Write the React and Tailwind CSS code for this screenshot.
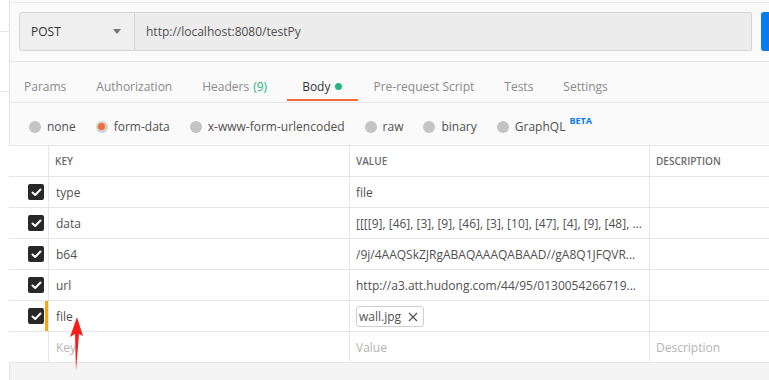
import React from 'react';

const tabs = [
  { label: 'Params' },
  { label: 'Authorization' },
  { label: 'Headers', count: '(9)' },
  { label: 'Body', active: true },
  { label: 'Pre-request Script' },
  { label: 'Tests' },
  { label: 'Settings' },
];

const bodyTypes = [
  { label: 'none' },
  { label: 'form-data', selected: true },
  { label: 'x-www-form-urlencoded' },
  { label: 'raw' },
  { label: 'binary' },
  { label: 'GraphQL', beta: true },
];

const rows = [
  { key: 'type', value: 'file' },
  { key: 'data', value: '[[[[9], [46], [3], [9], [46], [3], [10], [47], [4], [9], [48], ...' },
  { key: 'b64', value: '/9j/4AAQSkZJRgABAQAAAQABAAD//gA8Q1JFQVR...' },
  { key: 'url', value: 'http://a3.att.hudong.com/44/95/0130054266719...' },
  { key: 'file', file: 'wall.jpg', editing: true },
];

function Check() {
  return (
    <div className="w-[16px] h-[16px] rounded-[2px] bg-[#282828] flex items-center justify-center">
      <svg width="11" height="9" viewBox="0 0 11 9" fill="none">
        <path d="M1.5 4.5 L4.2 7 L9.5 1.5" stroke="white" strokeWidth="2" strokeLinecap="round" strokeLinejoin="round" />
      </svg>
    </div>
  );
}

export default function App() {
  return (
    <div className="relative w-[769px] h-[380px] flex overflow-hidden bg-[#fafafa] text-[12px] text-[#505050]" style={{ fontFamily: '"Open Sans", "Liberation Sans", sans-serif' }}>
      {/* sidebar edge */}
      <div className="w-[10px] shrink-0 bg-white border-r border-[#e2e2e2] flex flex-col">
        <div className="h-[32px] border-b border-[#e6e6e6]" />
        <div className="h-[60px] border-b border-[#e6e6e6]" />
      </div>

      <div className="flex-1 flex flex-col min-w-0">
        <div className="h-[3px] border-b border-[#ececec]" />

        {/* request bar */}
        <div className="flex items-stretch h-[59px] pt-[9px] pb-[10px] pl-[9px] border-b border-[#e6e6e6]">
          <div className="w-[116px] flex items-center justify-between pl-[11px] pr-[13px] bg-[#efefef] border border-[#d4d4d4] rounded-l-[3px]">
            <span className="text-[#333]">POST</span>
            <svg width="8" height="5" viewBox="0 0 8 5"><path d="M0 0 H8 L4 5 Z" fill="#777" /></svg>
          </div>
          <div className="w-[617px] flex items-center pl-[11px] bg-[#ececec] border border-l-0 border-[#d4d4d4] rounded-r-[2px] text-[#505050]">
            http://localhost:8080/testPy
          </div>
          <div className="ml-[9px] flex-1 bg-[#097bed] rounded-l-[3px]" />
        </div>

        {/* tabs */}
        <div className="flex h-[41px] border-b border-[#e6e6e6] -ml-[1px]">
          {tabs.map((t) => (
            <div
              key={t.label}
              className={`relative flex items-center gap-[5px] pl-[15px] pt-[9px] ${t.count ? 'pr-[20px]' : t.active ? 'pr-[16px]' : 'pr-[15px]'} ${t.active ? 'text-[#333]' : 'text-[#8a8a8a]'}`}
            >
              <span>{t.label}</span>
              {t.count && <span className="-ml-[1px] text-[#26b47f]">{t.count}</span>}
              {t.active && <span className="w-[7px] h-[7px] rounded-full bg-[#26b47f]" />}
              {t.active && <div className="absolute left-0 right-0 bottom-[1px] h-[2px] bg-[#f26b3a]" />}
            </div>
          ))}
        </div>

        {/* body types */}
        <div className="flex items-center h-[42px] pl-[19px] pt-[5px] gap-[20px]">
          {bodyTypes.map((b) => (
            <div key={b.label} className="flex items-center gap-[6px]">
              {b.selected ? (
                <span className="w-[12px] h-[12px] rounded-full bg-[#d0d0d0] flex items-center justify-center">
                  <span className="w-[7px] h-[7px] rounded-full bg-[#f26b3a]" />
                </span>
              ) : (
                <span className="w-[12px] h-[12px] rounded-full bg-[#c4c4c4]" />
              )}
              <span className="text-[#505050]">{b.label}</span>
              {b.beta && <span className="self-start -mt-[4px] -ml-[2px] text-[9px] font-bold text-[#097bed]">BETA</span>}
            </div>
          ))}
        </div>

        {/* params table */}
        <div className="-ml-[1px] bg-white border-t border-[#e6e6e6]">
          <div className="flex h-[31px] border-b border-[#e6e6e6] text-[10px] font-semibold text-[#6b6b6b]">
            <div className="w-[40px] border-r border-[#e6e6e6]" />
            <div className="w-[301px] flex items-center pl-[6px] border-r border-[#e6e6e6]">KEY</div>
            <div className="w-[300px] flex items-center pl-[6px] border-r border-[#e6e6e6]">VALUE</div>
            <div className="flex-1 flex items-center pl-[6px]">DESCRIPTION</div>
          </div>
          {rows.map((r) => (
            <div key={r.key} className="flex h-[31px] border-b border-[#e6e6e6]">
              <div className="relative w-[40px] flex items-center pl-[19px] border-r border-[#e6e6e6]">
                <Check />
                {r.editing && <div className="absolute right-0 top-0 bottom-0 w-[3px] bg-[#f5a70f]" />}
              </div>
              <div className="w-[301px] flex items-center pl-[7px] pt-[1px] border-r border-[#e6e6e6]">{r.key}</div>
              <div className="w-[300px] flex items-center pl-[6px] pr-[6px] pt-[1px] border-r border-[#e6e6e6] min-w-0">
                {r.file ? (
                  <span className="flex items-center gap-[7px] h-[21px] pl-[2px] pr-[5px] border border-[#cfcfcf] rounded-[3px]">
                    {r.file}
                    <svg width="10" height="10" viewBox="0 0 10 10"><path d="M1 1 L9 9 M9 1 L1 9" stroke="#555" strokeWidth="1.3" /></svg>
                  </span>
                ) : (
                  <span className="truncate">{r.value}</span>
                )}
              </div>
              <div className="flex-1" />
            </div>
          ))}
          <div className="flex h-[31px] border-b border-[#e6e6e6] text-[#b4b4b4]">
            <div className="w-[40px] border-r border-[#e6e6e6]" />
            <div className="w-[301px] flex items-center pl-[7px] pt-[1px] border-r border-[#e6e6e6]">Key</div>
            <div className="w-[300px] flex items-center pl-[6px] pt-[1px] border-r border-[#e6e6e6]">Value</div>
            <div className="flex-1 flex items-center pl-[6px] pt-[1px]">Description</div>
          </div>
        </div>
        <div className="flex-1 bg-[#f4f4f4]" />
      </div>

      {/* red annotation arrow */}
      <svg className="absolute left-[66px] top-[315px]" width="24" height="58" viewBox="0 0 24 58">
        <path d="M11 2 L17 21 L13 19 L10 56 L9 19 L4 22 Z" fill="#f5201a" />
      </svg>
    </div>
  );
}
